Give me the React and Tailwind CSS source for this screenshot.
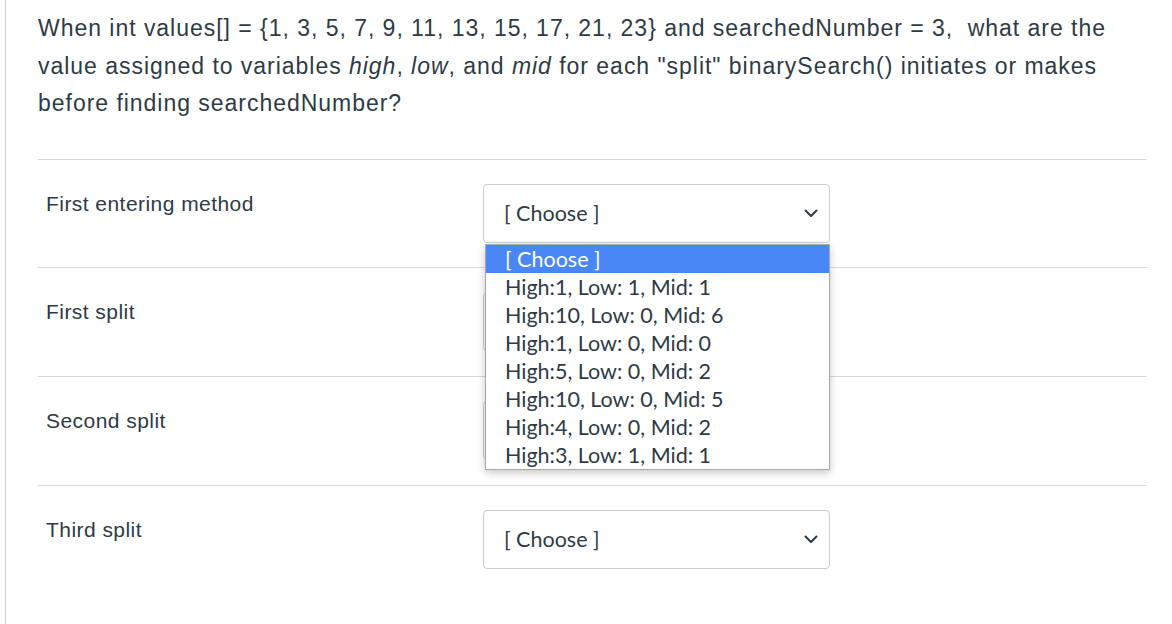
import React from "react";

const OPTIONS = [
  "[ Choose ]",
  "High:1, Low: 1, Mid: 1",
  "High:10, Low: 0, Mid: 6",
  "High:1, Low: 0, Mid: 0",
  "High:5, Low: 0, Mid: 2",
  "High:10, Low: 0, Mid: 5",
  "High:4, Low: 0, Mid: 2",
  "High:3, Low: 1, Mid: 1",
];

const ROWS = ["First entering method", "First split", "Second split", "Third split"];

function Chevron() {
  return (
    <svg width="14" height="9" viewBox="0 0 14 9" className="text-[#2d3b45]">
      <path d="M1.5 1.5 L7 7 L12.5 1.5" fill="none" stroke="currentColor" strokeWidth="2" strokeLinecap="round" strokeLinejoin="round" />
    </svg>
  );
}

function FakeSelect({ open }) {
  return (
    <div className="relative">
      <div className="flex h-[59px] w-[347px] items-center justify-between rounded-[4px] border border-[#c7cdd1] bg-white pl-5 pr-[11px]">
        <span className="font-['Lato','Liberation_Sans',sans-serif] text-[21.5px] text-[#2d3b45]">[ Choose ]</span>
        <Chevron />
      </div>
      {open && (
        <ul className="absolute left-[2px] top-[60px] z-10 w-[345px] border border-[#a8a8a8] bg-white font-['Lato','Liberation_Sans',sans-serif] text-[21.5px] leading-[28px] text-[#2d3b45] shadow-[0_3px_8px_rgba(0,0,0,0.22)]">
          {OPTIONS.map((o, i) => (
            <li key={o} className={`h-[28px] pl-[19px] ${i === 0 ? "bg-[#4a87f6] text-white" : ""}`}>
              {o}
            </li>
          ))}
        </ul>
      )}
    </div>
  );
}

export default function App() {
  return (
    <div className="min-h-[624px] bg-white font-['Liberation_Sans',Arial,sans-serif] text-[#2d3b45]">
      <div className="ml-[5px] min-h-[624px] border-l border-[#c7cdd1] pl-[32px] pr-[25px] pt-[10px]">
        <p className="whitespace-nowrap text-[23px] leading-[37.5px] tracking-[0.97px]">
          When int values[] = {"{"}1, 3, 5, 7, 9, 11, 13, 15, 17, 21, 23{"}"} and searchedNumber = 3,&nbsp; what are the
          <br />
          value assigned to variables <i>high</i>, <i>low</i>, and <i>mid</i> for each "split" binarySearch() initiates or
          makes
          <br />
          before finding searchedNumber?
        </p>
        <div className="mt-[36px]">
          {ROWS.map((label, i) => (
            <div key={label} className="flex h-[108.7px] border-t border-[#d7dadd] pt-[24px]">
              <div className="w-[445px] pl-2 pt-[6px] text-[21px] leading-[28px] tracking-[0.45px]">{label}</div>
              <FakeSelect open={i === 0} />
            </div>
          ))}
        </div>
      </div>
    </div>
  );
}
